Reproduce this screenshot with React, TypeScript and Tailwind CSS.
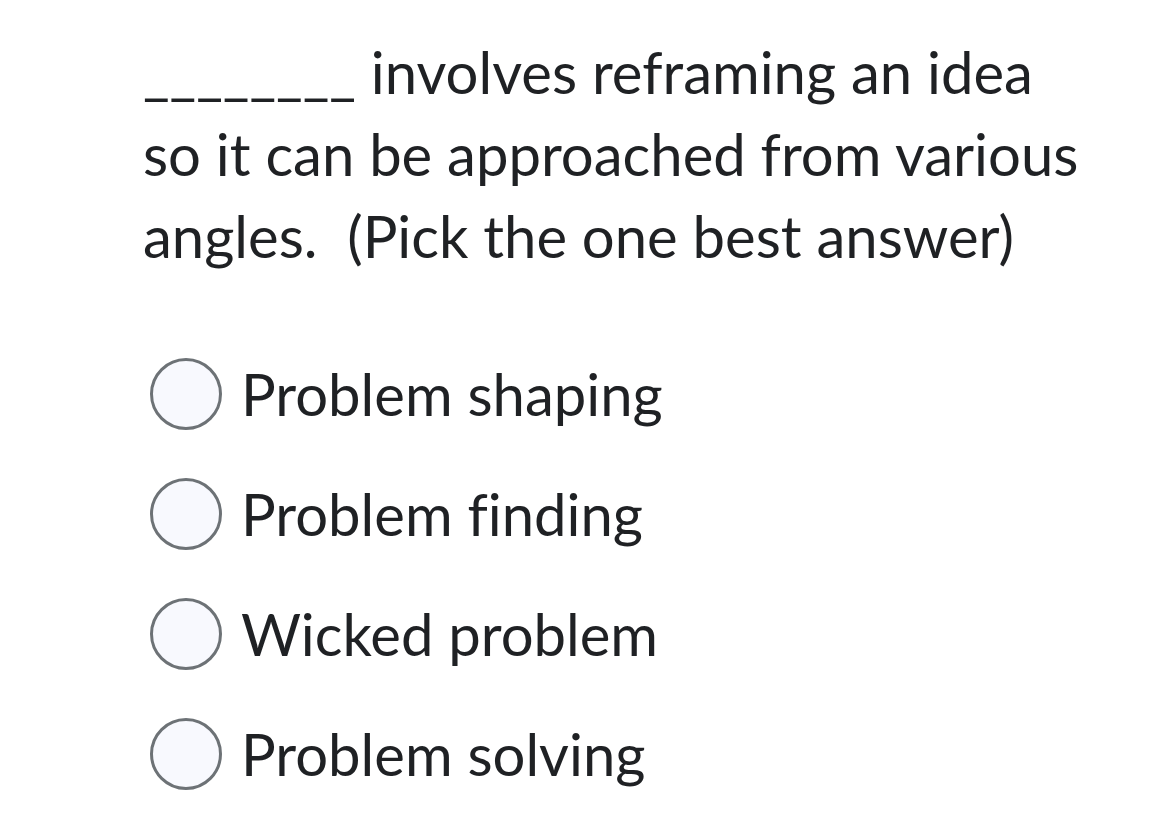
export default function App() {
  const options = ['Problem shaping', 'Problem finding', 'Wicked problem', 'Problem solving']

  return (
    <div
      className="h-[834px] w-[1170px] bg-white pl-[143px] pt-[31px] text-[#1f2124] [font-variant-ligatures:none]"
      style={{ fontFamily: 'Lato, "Noto Sans", sans-serif' }}
    >
      <p className="w-[950px] text-[58px] leading-[82px]">
        ________ involves reframing an idea so it can be approached from various angles.&nbsp; (Pick the one
        best answer)
      </p>

      <div className="mt-[81px] flex flex-col gap-[48px] pl-[7px]">
        {options.map((o) => (
          <label key={o} className="flex h-[72px] items-center gap-[19px]">
            <span className="h-[72px] w-[72px] shrink-0 rounded-full border-[3px] border-[#6d7276] bg-[#f8f9fe]" />
            <span className="text-[58px] leading-[72px]">{o}</span>
          </label>
        ))}
      </div>
    </div>
  )
}
